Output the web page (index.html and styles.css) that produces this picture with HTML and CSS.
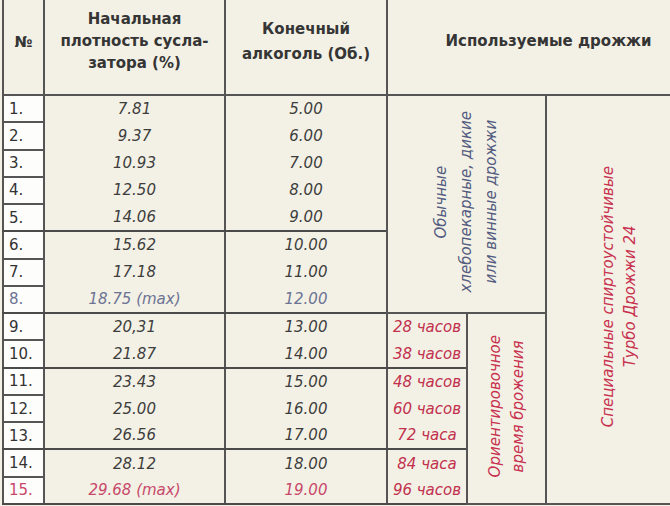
FILE: index.html
```html
<!DOCTYPE html>
<html lang="ru">
<head>
<meta charset="utf-8">
<link rel="stylesheet" href="styles.css">
</head>
<body>
<table class="brew">
  <colgroup>
    <col class="c-n"><col class="c-og"><col class="c-abv"><col class="c-h"><col class="c-t"><col class="c-s">
  </colgroup>
  <thead>
    <tr class="head">
      <th class="hn">№</th>
      <th>Начальная<br>плотность сусла-<br>затора (%)</th>
      <th class="h-abv">Конечный<br>алкоголь (Об.)</th>
      <th colspan="3" class="h-yeast">Используемые дрожжи</th>
    </tr>
  </thead>
  <tbody>
    <tr>
      <td class="n">1.</td><td class="v">7.81</td><td class="v">5.00</td>
      <td class="span" rowspan="8" colspan="2"><div class="vert blue l25">Обычные<br>хлебопекарные, дикие<br>или винные дрожжи</div></td>
      <td class="span s-last" rowspan="15"><div class="vert red l22">Специальные спиртоустойчивые<br>Турбо Дрожжи 24</div></td>
    </tr>
    <tr><td class="n">2.</td><td class="v">9.37</td><td class="v">6.00</td></tr>
    <tr><td class="n">3.</td><td class="v">10.93</td><td class="v">7.00</td></tr>
    <tr><td class="n">4.</td><td class="v">12.50</td><td class="v">8.00</td></tr>
    <tr class="end"><td class="n">5.</td><td class="v">14.06</td><td class="v">9.00</td></tr>
    <tr><td class="n">6.</td><td class="v">15.62</td><td class="v">10.00</td></tr>
    <tr><td class="n">7.</td><td class="v">17.18</td><td class="v">11.00</td></tr>
    <tr class="end max-blue"><td class="n">8.</td><td class="v">18.75 (max)</td><td class="v">12.00</td></tr>
    <tr>
      <td class="n">9.</td><td class="v">20,31</td><td class="v">13.00</td><td class="h">28 часов</td>
      <td class="span" rowspan="7"><div class="vert red l23">Ориентировочное<br>время брожения</div></td>
    </tr>
    <tr class="end"><td class="n">10.</td><td class="v">21.87</td><td class="v">14.00</td><td class="h">38 часов</td></tr>
    <tr><td class="n">11.</td><td class="v">23.43</td><td class="v">15.00</td><td class="h">48 часов</td></tr>
    <tr><td class="n">12.</td><td class="v">25.00</td><td class="v">16.00</td><td class="h">60 часов</td></tr>
    <tr class="end"><td class="n">13.</td><td class="v">26.56</td><td class="v">17.00</td><td class="h">72 часа</td></tr>
    <tr><td class="n">14.</td><td class="v">28.12</td><td class="v">18.00</td><td class="h">84 часа</td></tr>
    <tr class="end max-red"><td class="n">15.</td><td class="v">29.68 (max)</td><td class="v">19.00</td><td class="h">96 часов</td></tr>
  </tbody>
</table>
</body>
</html>
```

FILE: styles.css
```css
html, body {
  margin: 0;
  padding: 0;
  overflow: hidden;
  background: #f3f1e5;
}
body {
  font-family: "DejaVu Sans", Verdana, sans-serif;
  color: #333;
}
.brew {
  border-collapse: collapse;
  table-layout: fixed;
  width: 700px;
  margin-left: 2px;
  background: #f3f1e5;
}
.c-n { width: 41px; }
.c-og { width: 181px; }
.c-abv { width: 162px; }
.c-h { width: 80px; }
.c-t { width: 79px; }
.c-s { width: 157px; }

.head { height: 95px; }
.head th {
  border: 2px solid #555;
  border-top: none;
  font-size: 15px;
  font-weight: bold;
  line-height: 22px;
  color: #353535;
  padding: 0 0 12px 0;
  vertical-align: middle;
  text-align: center;
}
.head .h-abv { line-height: 25px; padding-bottom: 10px; }
.head .h-yeast { border-right: none; padding-left: 6px; }
.head .hn { padding-bottom: 10px; }

tbody tr { height: 27.27px; }
tbody td {
  padding: 0;
  font-size: 15px;
  line-height: 20px;
  white-space: nowrap;
}
td.n {
  background: #fdfdfb;
  border: 2px solid #555;
  text-align: left;
  padding-left: 5px;
  color: #333;
}
td.v {
  font-style: italic;
  text-align: center;
  color: #3d3d3d;
  border-left: 2px solid #555;
  border-right: 2px solid #555;
}
td.h {
  font-style: italic;
  text-align: center;
  color: #c2304e;
  border-left: 2px solid #555;
  border-right: 2px solid #555;
}
tr.end td.v, tr.end td.h, tr.end td.n {
  border-bottom: 2px solid #4a4a4a;
}
tr.max-blue td.n, tr.max-blue td.v { color: #6c7394; }
tr.max-red td.n, tr.max-red td.v { color: #c8486a; }

td.span {
  border: 2px solid #555;
  text-align: center;
  vertical-align: middle;
  padding: 0;
}
td.s-last { border-right: none; padding-right: 12px; }

.vert {
  display: inline-block;
  writing-mode: vertical-rl;
  transform: rotate(180deg);
  font-style: italic;
  font-size: 15px;
  text-align: center;
  white-space: nowrap;
}
.l25 { line-height: 25px; }
.l23 { line-height: 23px; }
.l22 { line-height: 22px; }
.blue { color: #545b80; }
.red { color: #c8304f; }
```
